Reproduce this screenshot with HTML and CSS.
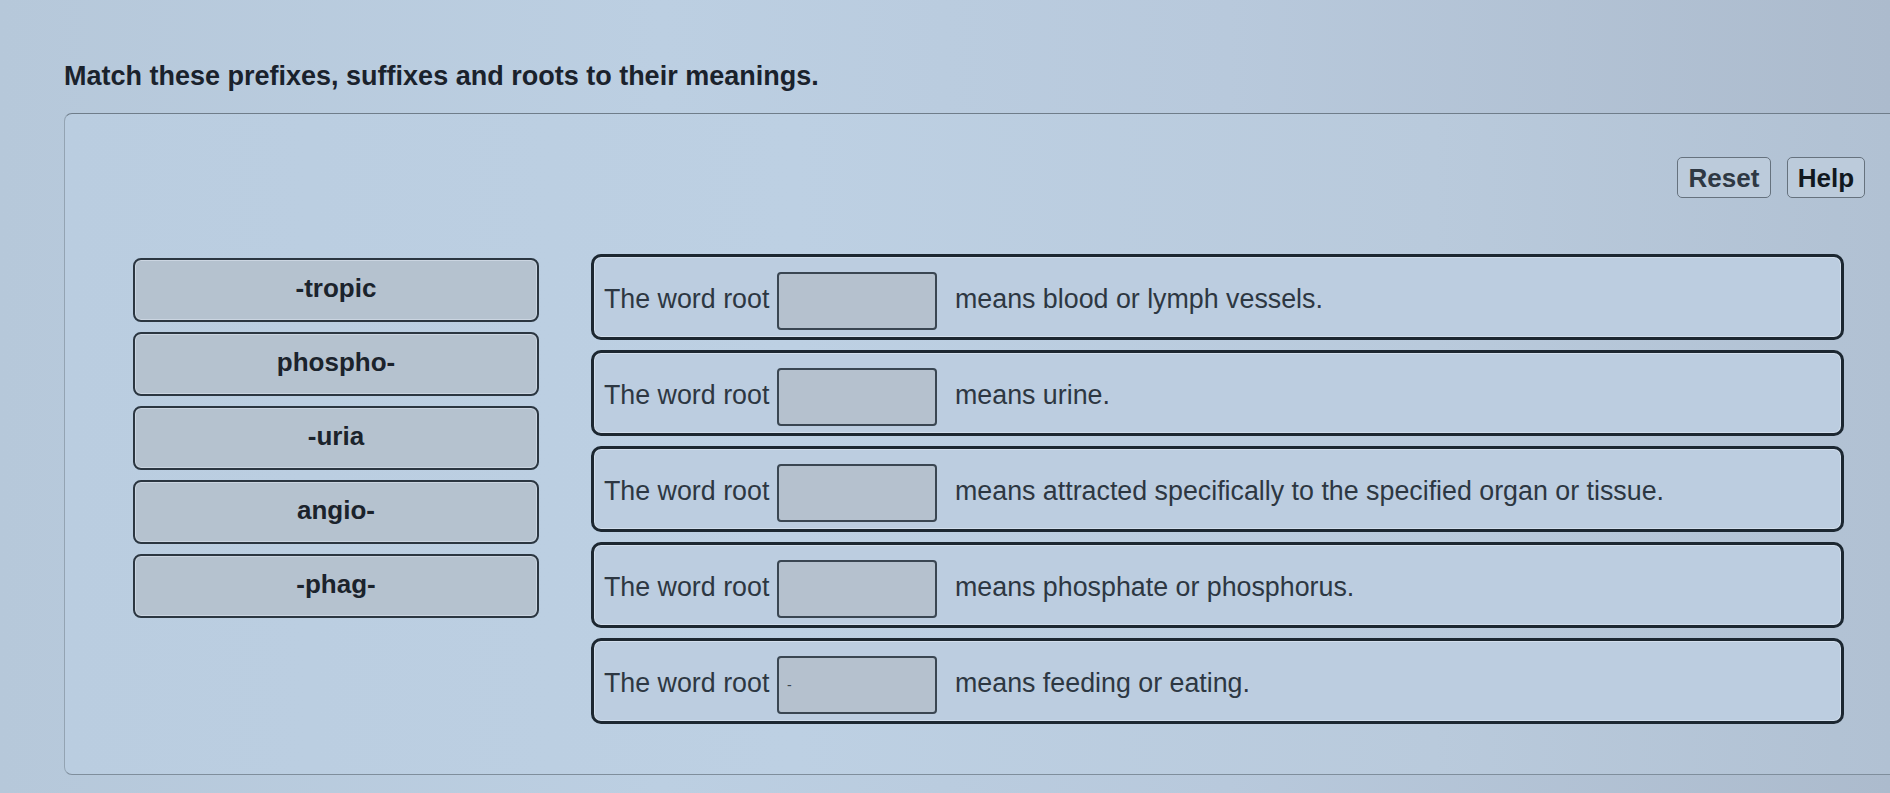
FILE: index.html
```html
<!DOCTYPE html>
<html lang="en">
<head>
<meta charset="utf-8">
<title>Match prefixes</title>
<link rel="stylesheet" href="styles.css">
</head>
<body>
<div class="page">
  <h1 class="prompt">Match these prefixes, suffixes and roots to their meanings.</h1>
  <section class="panel">
    <div class="toolbar">
      <button class="btn btn-reset">Reset</button>
      <button class="btn btn-help">Help</button>
    </div>
    <div class="board">
      <div class="tiles">
        <div class="tile">-tropic</div>
        <div class="tile">phospho-</div>
        <div class="tile">-uria</div>
        <div class="tile">angio-</div>
        <div class="tile">-phag-</div>
      </div>
      <div class="rows">
        <div class="row"><span class="lead">The word root</span><span class="drop"></span><span class="meaning">means blood or lymph vessels.</span></div>
        <div class="row"><span class="lead">The word root</span><span class="drop"></span><span class="meaning">means urine.</span></div>
        <div class="row"><span class="lead">The word root</span><span class="drop"></span><span class="meaning">means attracted specifically to the specified organ or tissue.</span></div>
        <div class="row"><span class="lead">The word root</span><span class="drop"></span><span class="meaning">means phosphate or phosphorus.</span></div>
        <div class="row"><span class="lead">The word root</span><span class="drop"><span class="mark">-</span></span><span class="meaning">means feeding or eating.</span></div>
      </div>
    </div>
  </section>
</div>
</body>
</html>
```

FILE: styles.css
```css
html, body {
  margin: 0;
  padding: 0;
}

body {
  width: 1890px;
  height: 793px;
  overflow: hidden;
  font-family: "Liberation Sans", Arial, sans-serif;
  background: linear-gradient(90deg, #b6c8da 0%, #bccfe2 35%, #b8c9dc 65%, #acbbcd 100%);
  color: #1c2530;
}

.page {
  padding-top: 61px;
}

.prompt {
  margin: 0 0 0 64px;
  font-size: 27px;
  line-height: 30px;
  font-weight: bold;
  color: #1a222c;
}

.panel {
  margin-top: 22px;
  margin-left: 64px;
  height: 662px;
  border-top: 1px solid #6f7d8a;
  border-left: 1px solid #93a3b2;
  border-bottom: 1px solid #7f8e9c;
  border-top-left-radius: 8px;
  border-bottom-left-radius: 8px;
  background: linear-gradient(90deg, #bacde0 0%, #bdd0e3 40%, #b9cadc 75%, #b1c1d3 100%);
  box-sizing: border-box;
}

.toolbar {
  display: flex;
  justify-content: flex-end;
  gap: 16px;
  padding: 43px 25px 0 0;
}

.btn {
  font-family: "Liberation Sans", Arial, sans-serif;
  font-size: 26px;
  font-weight: bold;
  height: 41px;
  padding: 0 9px;
  border: 1.5px solid #66727e;
  border-radius: 5px;
  background: #bccbdb;
  line-height: 38px;
}

.btn-reset {
  color: #2e3843;
  width: 94px;
}

.btn-help {
  color: #111820;
  width: 78px;
}

.board {
  display: flex;
  align-items: flex-start;
  gap: 52px;
  padding-left: 68px;
  margin-top: 56px;
}

.tiles {
  display: flex;
  flex-direction: column;
  gap: 10px;
  width: 406px;
  padding-top: 4px;
}

.tile {
  height: 64px;
  box-sizing: border-box;
  border: 2.5px solid #2b3641;
  border-radius: 8px;
  background: #b5c2cf;
  box-shadow: inset 0 0 0 1px rgba(230, 238, 246, 0.45);
  display: flex;
  align-items: center;
  justify-content: center;
  font-size: 26px;
  font-weight: bold;
  color: #1b232c;
  padding-bottom: 4px;
}

.rows {
  display: flex;
  flex-direction: column;
  gap: 10px;
  width: 1253px;
}

.row {
  height: 86px;
  box-sizing: border-box;
  border: 3px solid #1c2731;
  border-radius: 10px;
  background: #bccde0;
  box-shadow: inset 0 0 0 1px rgba(232, 240, 248, 0.5);
  display: flex;
  align-items: center;
  padding-left: 10px;
  padding-top: 5px;
  font-size: 26.8px;
  color: #2d3742;
}

.lead {
  width: 173px;
  white-space: nowrap;
}

.drop {
  width: 160px;
  height: 58px;
  margin-top: 2px;
  box-sizing: border-box;
  border: 2px solid #3a4652;
  border-radius: 4px;
  background: #b5c1ce;
  display: flex;
  align-items: center;
}

.mark {
  font-size: 14px;
  color: #3a4652;
  margin-left: 8px;
}

.meaning {
  margin-left: 18px;
  white-space: nowrap;
}
```
